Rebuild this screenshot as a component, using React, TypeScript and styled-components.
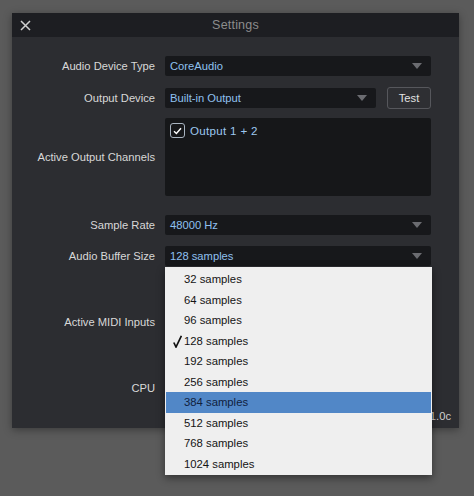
import React from "react";
import styled, { createGlobalStyle } from "styled-components";

const GlobalStyle = createGlobalStyle`
  html, body {
    margin: 0;
    padding: 0;
    height: 100%;
    background: #5b5b5b;
  }
  body {
    font-family: "Liberation Sans", Arial, sans-serif;
  }
`;

const Page = styled.div`
  padding: 13px 0 0 12px;
  min-height: 496px;
  box-sizing: border-box;
`;

const Dialog = styled.div`
  width: 447px;
  height: 415px;
  display: flex;
  flex-direction: column;
  background: #2c2d31;
  box-shadow: 0 2px 8px rgba(0, 0, 0, 0.35);
`;

const TitleBar = styled.div`
  height: 24px;
  flex: none;
  display: flex;
  align-items: center;
  justify-content: center;
  position: relative;
  background: #1d1e22;
  color: #8c8c8c;
  font-size: 12.5px;
  letter-spacing: 0.2px;
`;

const CloseButton = styled.span`
  position: absolute;
  left: 8px;
  top: 7px;
  width: 11px;
  height: 11px;
  display: flex;
`;

const Body = styled.div`
  flex: 1;
  padding: 19px 28px 0 0;
  display: flex;
  flex-direction: column;
  gap: 11px;
`;

const Row = styled.div<{ $h: number; $mt?: number }>`
  display: grid;
  grid-template-columns: 143px 1fr;
  column-gap: 10px;
  align-items: center;
  height: ${(p) => p.$h}px;
  margin-top: ${(p) => p.$mt ?? 0}px;
`;

const Label = styled.div`
  text-align: right;
  color: #d8d8d8;
  font-size: 11.2px;
  white-space: nowrap;
`;

const Controls = styled.div`
  display: flex;
  align-items: center;
  gap: 11px;
  height: 100%;
  position: relative;
`;

const Select = styled.div`
  flex: 1;
  height: 20px;
  display: flex;
  align-items: center;
  justify-content: space-between;
  padding: 0 9px 0 5px;
  background: #17181b;
  border-radius: 2px;
  color: #8fc0ef;
  font-size: 11.2px;
`;

const TestButton = styled.div`
  width: 42px;
  height: 20px;
  flex: none;
  display: flex;
  align-items: center;
  justify-content: center;
  border: 1px solid #56575c;
  border-radius: 3px;
  background: #2e2f33;
  color: #e2e2e2;
  font-size: 11.2px;
`;

const ListBox = styled.div`
  flex: 1;
  height: 100%;
  box-sizing: border-box;
  padding: 5px 5px;
  background: #161719;
  border-radius: 2px;
`;

const ChannelItem = styled.div`
  display: flex;
  align-items: center;
  gap: 5px;
  color: #9cc8f0;
  font-size: 11.6px;
  letter-spacing: 0.3px;
`;

const CheckBox = styled.span`
  width: 15px;
  height: 15px;
  box-sizing: border-box;
  border: 1.5px solid #a9b4c0;
  border-radius: 3px;
  display: flex;
  align-items: center;
  justify-content: center;
`;

const Meter = styled.div`
  flex: 1;
  height: 12px;
  background: #17181b;
`;

const Footer = styled.div`
  height: 24px;
  flex: none;
  display: flex;
  align-items: center;
  justify-content: flex-end;
  padding-right: 8px;
  color: #cfcfcf;
  font-size: 11.2px;
`;

const Menu = styled.ul`
  position: absolute;
  top: 100%;
  left: 0;
  width: 267px;
  margin: 1px 0 0;
  padding: 2px 0 1px;
  list-style: none;
  background: #efefef;
  box-shadow: 0 3px 8px rgba(0, 0, 0, 0.45);
  z-index: 10;
`;

const MenuItem = styled.li<{ $active?: boolean }>`
  position: relative;
  height: 20.5px;
  margin: 0 1px;
  display: flex;
  align-items: center;
  padding-left: 18px;
  font-size: 11.3px;
  color: ${(p) => (p.$active ? "#10213d" : "#141414")};
  background: ${(p) => (p.$active ? "#5187c7" : "transparent")};
`;

const Tick = styled.span`
  position: absolute;
  left: 7px;
  top: 4px;
  display: flex;
`;

const Arrow = () => (
  <svg width="10" height="6" viewBox="0 0 10 6">
    <polygon points="0,0 10,0 5,6" fill="#6b6c71" />
  </svg>
);

const sizes = [32, 64, 96, 128, 192, 256, 384, 512, 768, 1024];

export default function App() {
  return (
    <Page>
      <GlobalStyle />
      <Dialog>
        <TitleBar>
          <CloseButton>
            <svg width="11" height="11" viewBox="0 0 11 11">
              <path d="M1 1 L10 10 M10 1 L1 10" stroke="#d0d0d0" strokeWidth="1.5" />
            </svg>
          </CloseButton>
          Settings
        </TitleBar>
        <Body>
          <Row $h={20}>
            <Label>Audio Device Type</Label>
            <Controls>
              <Select>
                CoreAudio
                <Arrow />
              </Select>
            </Controls>
          </Row>
          <Row $h={20}>
            <Label>Output Device</Label>
            <Controls>
              <Select>
                Built-in Output
                <Arrow />
              </Select>
              <TestButton>Test</TestButton>
            </Controls>
          </Row>
          <Row $h={78}>
            <Label>Active Output Channels</Label>
            <Controls>
              <ListBox>
                <ChannelItem>
                  <CheckBox>
                    <svg width="9" height="8" viewBox="0 0 9 8">
                      <path d="M1 4.2 L3.4 6.5 L8 1.2" stroke="#ffffff" strokeWidth="1.4" fill="none" />
                    </svg>
                  </CheckBox>
                  Output 1 + 2
                </ChannelItem>
              </ListBox>
            </Controls>
          </Row>
          <Row $h={20} $mt={8}>
            <Label>Sample Rate</Label>
            <Controls>
              <Select>
                48000 Hz
                <Arrow />
              </Select>
            </Controls>
          </Row>
          <Row $h={20}>
            <Label>Audio Buffer Size</Label>
            <Controls>
              <Select>
                128 samples
                <Arrow />
              </Select>
              <Menu>
                {sizes.map((s) => (
                  <MenuItem key={s} $active={s === 384}>
                    {s === 128 && (
                      <Tick>
                        <svg width="9" height="13" viewBox="0 0 9 13">
                          <path d="M0.8 7.5 L3 12 L8.4 0.8" stroke="#111" strokeWidth="1.7" fill="none" />
                        </svg>
                      </Tick>
                    )}
                    {s} samples
                  </MenuItem>
                ))}
              </Menu>
            </Controls>
          </Row>
          <Row $h={90}>
            <Label>Active MIDI Inputs</Label>
            <Controls>
              <ListBox />
            </Controls>
          </Row>
          <Row $h={20}>
            <Label>CPU</Label>
            <Controls>
              <Meter />
            </Controls>
          </Row>
        </Body>
        <Footer>v1.0c</Footer>
      </Dialog>
    </Page>
  );
}
